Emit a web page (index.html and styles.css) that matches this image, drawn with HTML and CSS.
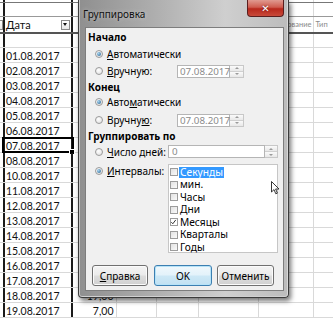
FILE: index.html
```html
<!DOCTYPE html>
<html lang="ru">
<head>
<meta charset="utf-8">
<title>Группировка</title>
<link rel="stylesheet" href="styles.css">
</head>
<body>
<div class="sheet">
  <div class="row r0"><div class="c a"></div><div class="c b"></div><div class="c cc"></div><div class="c d"></div><div class="c e"></div><div class="c f"></div><div class="c g"></div><div class="c h"></div></div>
  <div class="row r1"><div class="c a"></div><div class="c b"></div><div class="c cc"></div><div class="c d"></div><div class="c e"></div><div class="c f"></div><div class="c g"></div><div class="c h"></div></div>
  <div class="row hdr">
    <div class="c a"><span class="dd dd-cut"></span></div>
    <div class="c b"><span class="htext">Дата</span><span class="dd"></span></div>
    <div class="c cc"></div><div class="c d"></div><div class="c e"></div><div class="c f"></div>
    <div class="c g"><span class="ghead">Наименование</span></div>
    <div class="c h"><span class="ghead">Тип</span></div>
  </div>
  <div class="row blank"><div class="c a"></div><div class="c b"></div><div class="c cc"></div><div class="c d"></div><div class="c e"></div><div class="c f"></div><div class="c g"></div><div class="c h"></div></div>
  <div class="row"><div class="c a"></div><div class="c b">01.08.2017</div><div class="c cc"></div><div class="c d"></div><div class="c e"></div><div class="c f"></div><div class="c g"></div><div class="c h"></div></div>
  <div class="row"><div class="c a"></div><div class="c b">02.08.2017</div><div class="c cc"></div><div class="c d"></div><div class="c e"></div><div class="c f"></div><div class="c g"></div><div class="c h"></div></div>
  <div class="row"><div class="c a"></div><div class="c b">03.08.2017</div><div class="c cc"></div><div class="c d"></div><div class="c e"></div><div class="c f"></div><div class="c g"></div><div class="c h"></div></div>
  <div class="row"><div class="c a"></div><div class="c b">04.08.2017</div><div class="c cc"></div><div class="c d"></div><div class="c e"></div><div class="c f"></div><div class="c g"></div><div class="c h"></div></div>
  <div class="row"><div class="c a"></div><div class="c b">05.08.2017</div><div class="c cc"></div><div class="c d"></div><div class="c e"></div><div class="c f"></div><div class="c g"></div><div class="c h"></div></div>
  <div class="row"><div class="c a"></div><div class="c b">06.08.2017</div><div class="c cc"></div><div class="c d"></div><div class="c e"></div><div class="c f"></div><div class="c g"></div><div class="c h"></div></div>
  <div class="row"><div class="c a"></div><div class="c b sel">07.08.2017<span class="handle"></span></div><div class="c cc"></div><div class="c d"></div><div class="c e"></div><div class="c f"></div><div class="c g"></div><div class="c h"></div></div>
  <div class="row"><div class="c a"></div><div class="c b">08.08.2017</div><div class="c cc"></div><div class="c d"></div><div class="c e"></div><div class="c f"></div><div class="c g"></div><div class="c h"></div></div>
  <div class="row"><div class="c a"></div><div class="c b">10.08.2017</div><div class="c cc"></div><div class="c d"></div><div class="c e"></div><div class="c f"></div><div class="c g"></div><div class="c h"></div></div>
  <div class="row"><div class="c a"></div><div class="c b">11.08.2017</div><div class="c cc"></div><div class="c d"></div><div class="c e"></div><div class="c f"></div><div class="c g"></div><div class="c h"></div></div>
  <div class="row"><div class="c a"></div><div class="c b">12.08.2017</div><div class="c cc"></div><div class="c d"></div><div class="c e"></div><div class="c f"></div><div class="c g"></div><div class="c h"></div></div>
  <div class="row"><div class="c a"></div><div class="c b">13.08.2017</div><div class="c cc"></div><div class="c d"></div><div class="c e"></div><div class="c f"></div><div class="c g"></div><div class="c h"></div></div>
  <div class="row"><div class="c a"></div><div class="c b">14.08.2017</div><div class="c cc"></div><div class="c d"></div><div class="c e"></div><div class="c f"></div><div class="c g"></div><div class="c h"></div></div>
  <div class="row"><div class="c a"></div><div class="c b">15.08.2017</div><div class="c cc"></div><div class="c d"></div><div class="c e"></div><div class="c f"></div><div class="c g"></div><div class="c h"></div></div>
  <div class="row"><div class="c a"></div><div class="c b">16.08.2017</div><div class="c cc"></div><div class="c d"></div><div class="c e"></div><div class="c f"></div><div class="c g"></div><div class="c h"></div></div>
  <div class="row"><div class="c a"></div><div class="c b">17.08.2017</div><div class="c cc"></div><div class="c d"></div><div class="c e"></div><div class="c f"></div><div class="c g"></div><div class="c h"></div></div>
  <div class="row"><div class="c a"></div><div class="c b">18.08.2017</div><div class="c cc num">19,00</div><div class="c d"></div><div class="c e"></div><div class="c f"></div><div class="c g"></div><div class="c h"></div></div>
  <div class="row"><div class="c a"></div><div class="c b">19.08.2017</div><div class="c cc num">7,00</div><div class="c d"></div><div class="c e"></div><div class="c f"></div><div class="c g"></div><div class="c h"></div></div>
</div>

<div class="dialog">
  <div class="titlebar">
    <span class="title">Группировка</span>
    <span class="close">&#x2715;</span>
  </div>
  <div class="client">
    <div class="grp g-start">Начало</div>
    <div class="opt o-a1"><span class="radio on"></span><span class="lbl"><u>А</u>втоматически</span></div>
    <div class="opt o-m"><span class="radio"></span><span class="lbl w70"><u>В</u>ручную:</span><span class="field date">07.08.2017</span><span class="spin sm"><i class="up"></i><i class="dn"></i></span></div>
    <div class="grp g-end">Конец</div>
    <div class="opt o-m"><span class="radio on"></span><span class="lbl">Авто<u>м</u>атически</span></div>
    <div class="opt o-m"><span class="radio"></span><span class="lbl w70">Вручну<u>ю</u>:</span><span class="field date">07.08.2017</span><span class="spin sm"><i class="up"></i><i class="dn"></i></span></div>
    <div class="grp g-end">Группировать по</div>
    <div class="opt o-days"><span class="radio"></span><span class="lbl w61"><u>Ч</u>исло дней:</span><span class="field days">0</span><span class="spin lg"><i class="up"></i><i class="dn"></i></span></div>
    <div class="opt o-int"><span class="radio on"></span><span class="lbl w61"><u>И</u>нтервалы:</span>
      <div class="list">
        <div class="item"><span class="cb"></span><span class="it hi">Секунды</span></div>
        <div class="item"><span class="cb"></span><span class="it">мин.</span></div>
        <div class="item"><span class="cb"></span><span class="it">Часы</span></div>
        <div class="item"><span class="cb"></span><span class="it">Дни</span></div>
        <div class="item"><span class="cb chk"><svg viewBox="0 0 8 8" width="8" height="8"><path d="M1.5 4.2 L3.2 6 L6.6 1.6" fill="none" stroke="#2a2a2a" stroke-width="1.1"/></svg></span><span class="it">Месяцы</span></div>
        <div class="item"><span class="cb"></span><span class="it">Кварталы</span></div>
        <div class="item"><span class="cb"></span><span class="it">Годы</span></div>
      </div>
    </div>
    <div class="buttons">
      <span class="btn b1"><u>С</u>правка</span>
      <span class="btn b2 def">OK</span>
      <span class="btn b3">Отменить</span>
    </div>
  </div>
</div>
<svg class="cursor" width="10" height="14" viewBox="0 0 10 14"><path d="M0.5 0.5 L0.5 11 L3 8.6 L4.8 12.8 L6.4 12.1 L4.6 8 L8 8 Z" fill="#fff" stroke="#222" stroke-width="0.9" stroke-linejoin="round"/></svg>
</body>
</html>
```
FILE: styles.css
```css
html, body {
  margin: 0;
  padding: 0;
  background: #ffffff;
  width: 333px;
  height: 320px;
  overflow: hidden;
  position: relative;
}

.sheet {
  font-family: Lato, "Liberation Sans", sans-serif;
  font-size: 10.5px;
  color: #111;
}

.row {
  display: flex;
  height: 15px;
  box-sizing: border-box;
  border-bottom: 1px solid #d9d9d9;
}
.row.r0 { height: 3px; border-bottom-color: #777; }
.row.r1 { height: 14px; border-bottom-color: #999; }
.row.hdr { height: 17px; border-bottom: 2px solid #555; }
.row.blank { height: 14px; }

.c {
  box-sizing: border-box;
  border-right: 1px solid #d9d9d9;
  display: flex;
  align-items: flex-end;
  padding: 0 2px 0 2px;
  line-height: 12px;
  white-space: nowrap;
  overflow: hidden;
  position: relative;
}
.c.a { width: 3px; padding: 0; border-right: none; }
.c.b {
  width: 72px;
  border-left: 2px solid #1a1a1a;
  border-right: 2px solid #1a1a1a;
  padding-left: 1px;
  overflow: visible;
}
.c.cc { width: 45px; justify-content: flex-end; }
.c.d { width: 42px; }
.c.e { width: 43px; }
.c.f { width: 62px; }
.c.g { width: 56px; justify-content: flex-end; padding-right: 1px; }
.c.h { width: 20px; border-right: none; }

.hdr .c { align-items: center; }
.hdr .c.b { justify-content: space-between; padding-right: 1px; }
.htext { font-size: 11px; }
.ghead { font-size: 7.5px; color: #8a8a8a; }

.dd {
  width: 9px;
  height: 10px;
  box-sizing: border-box;
  border: 1px solid #8a8a8a;
  background: linear-gradient(#ffffff, #e6e6e6);
  display: flex;
  align-items: center;
  justify-content: center;
}
.dd::after {
  content: "";
  border-left: 2.5px solid transparent;
  border-right: 2.5px solid transparent;
  border-top: 3px solid #111;
}
.dd-cut { margin-left: -6px; }

.sel {
  outline: 2px solid #000;
  outline-offset: -1px;
}
.handle {
  position: absolute;
  right: -4px;
  bottom: -3px;
  width: 4px;
  height: 4px;
  background: #000;
  border: 1px solid #fff;
}

.num { font-size: 10.5px; }

/* dialog */
.dialog {
  position: absolute;
  left: 78px;
  top: 0;
  width: 211px;
  height: 298px;
  box-sizing: border-box;
  border: 1px solid #3c3c3c;
  border-top: none;
  border-radius: 0 0 4px 4px;
  background: linear-gradient(90deg, #8f8f8f 0%, #adadad 35%, #cfcfcf 70%, #bcbcbc 100%);
  box-shadow: 2px 3px 5px rgba(0,0,0,0.55), inset 1px 0 0 #c8c8c8, inset -1px 0 0 #d8d8d8, inset 0 -1px 0 #d0d0d0;
  padding: 0 4px 6px 6px;
  display: flex;
  flex-direction: column;
  font-family: "Noto Sans", "Open Sans", sans-serif;
  font-size: 10px;
  color: #000;
}

.titlebar {
  height: 27px;
  flex: none;
  display: flex;
  justify-content: space-between;
  align-items: flex-start;
  margin-left: -2px;
}
.title {
  margin-top: 7px;
  font-size: 10px;
  color: #111;
  text-shadow: 0 0 4px rgba(255,255,255,0.5);
}
.close {
  width: 37px;
  height: 17px;
  box-sizing: border-box;
  border: 1px solid #5a1e1e;
  border-top: none;
  border-radius: 0 0 4px 4px;
  background: linear-gradient(#e09a90 0%, #cf5c4f 45%, #b8281c 55%, #c84a3a 100%);
  color: #fff;
  font-family: "DejaVu Sans", sans-serif;
  font-size: 10px;
  font-weight: bold;
  display: flex;
  align-items: center;
  justify-content: center;
  text-shadow: 0 0 2px #5a1010;
}

.client {
  flex: 1;
  background: #f0f0f0;
  border: 1px solid #7d7d7d;
  padding: 0 4px 0 2px;
  display: flex;
  flex-direction: column;
}

.grp {
  font-weight: bold;
  display: flex;
  align-items: center;
}
.g-start { height: 17px; }
.g-end { height: 13px; }

.opt {
  display: flex;
  align-items: center;
}
.o-a1 { height: 17px; }
.o-m { height: 18px; }
.o-days { height: 19px; }
.o-int { align-items: flex-start; margin-top: 3px; }

.radio {
  width: 8px;
  height: 8px;
  box-sizing: border-box;
  border-radius: 50%;
  border: 1px solid #9a9a9a;
  background: radial-gradient(circle at 40% 35%, #ffffff, #dcdcdc);
  margin-left: 7px;
  margin-right: 4px;
  flex: none;
  display: flex;
  align-items: center;
  justify-content: center;
}
.radio.on::after {
  content: "";
  width: 4px;
  height: 4px;
  border-radius: 50%;
  background: radial-gradient(circle at 35% 35%, #a9d4ef, #1d5e8e);
}
.o-int .radio { margin-top: 3px; }
.o-int .lbl { margin-top: 0px; line-height: 14px; }

.lbl { white-space: nowrap; }
.w70 { width: 70px; flex: none; }
.w61 { width: 61px; flex: none; }

.field {
  height: 13px;
  box-sizing: border-box;
  border: 1px solid #b5b5b5;
  background: #fff;
  color: #8c8c8c;
  line-height: 11px;
  padding-left: 3px;
  flex: none;
  font-size: 9.8px;
}
.date { width: 53px; padding-left: 2px; }
.days { width: 97px; }

.spin {
  height: 13px;
  display: flex;
  flex-direction: column;
  flex: none;
  box-sizing: border-box;
  border: 1px solid #c8c8c8;
  border-left: none;
}
.spin.sm { width: 14px; }
.spin.lg { width: 13px; }
.spin i {
  flex: 1;
  display: flex;
  align-items: center;
  justify-content: center;
  background: linear-gradient(#fafafa, #e8e8e8);
}
.spin i.up { border-bottom: 1px solid #d0d0d0; }
.spin i.up::after {
  content: "";
  border-left: 2px solid transparent;
  border-right: 2px solid transparent;
  border-bottom: 2px solid #9a9a9a;
}
.spin i.dn::after {
  content: "";
  border-left: 2px solid transparent;
  border-right: 2px solid transparent;
  border-top: 2px solid #9a9a9a;
}

.list {
  width: 110px;
  height: 89px;
  box-sizing: border-box;
  border: 1px solid #c6c6c6;
  background: #fff;
  padding: 1px 0 0 1px;
  flex: none;
}
.item {
  height: 12.5px;
  display: flex;
  align-items: center;
}
.cb {
  width: 8px;
  height: 8px;
  box-sizing: border-box;
  border: 1px solid #9c9c9c;
  background: linear-gradient(135deg, #e2e2e2, #fafafa);
  margin-right: 1px;
  flex: none;
  display: flex;
  overflow: hidden;
}
.cb.chk { background: #fff; }
.cb svg { margin: -1px 0 0 -1px; }
.it {
  line-height: 11px;
  padding: 0 1px;
  font-size: 10.2px;
}
.it.hi {
  background: #3399ff;
  color: #fff;
}

.buttons {
  display: flex;
  margin-top: 12px;
  margin-left: 4px;
}
.btn {
  height: 21px;
  box-sizing: border-box;
  border: 1px solid #707070;
  border-radius: 3px;
  background: linear-gradient(#f4f4f4 0%, #ebebeb 48%, #dddddd 52%, #d0d0d0 100%);
  box-shadow: inset 0 0 0 1px #fbfbfb;
  display: flex;
  align-items: center;
  justify-content: center;
  font-size: 10px;
}
.b1 { width: 56px; }
.b2 { width: 58px; margin-left: 6px; }
.b3 { width: 57px; margin-left: 5px; }
.btn.def {
  border-color: #3c7fb1;
  box-shadow: inset 0 0 0 1px #b6e3f8;
  background: linear-gradient(#f0f8fc 0%, #e3f2fa 48%, #cde8f6 52%, #c1e1f2 100%);
}

.cursor {
  position: absolute;
  left: 271px;
  top: 181px;
}
```
